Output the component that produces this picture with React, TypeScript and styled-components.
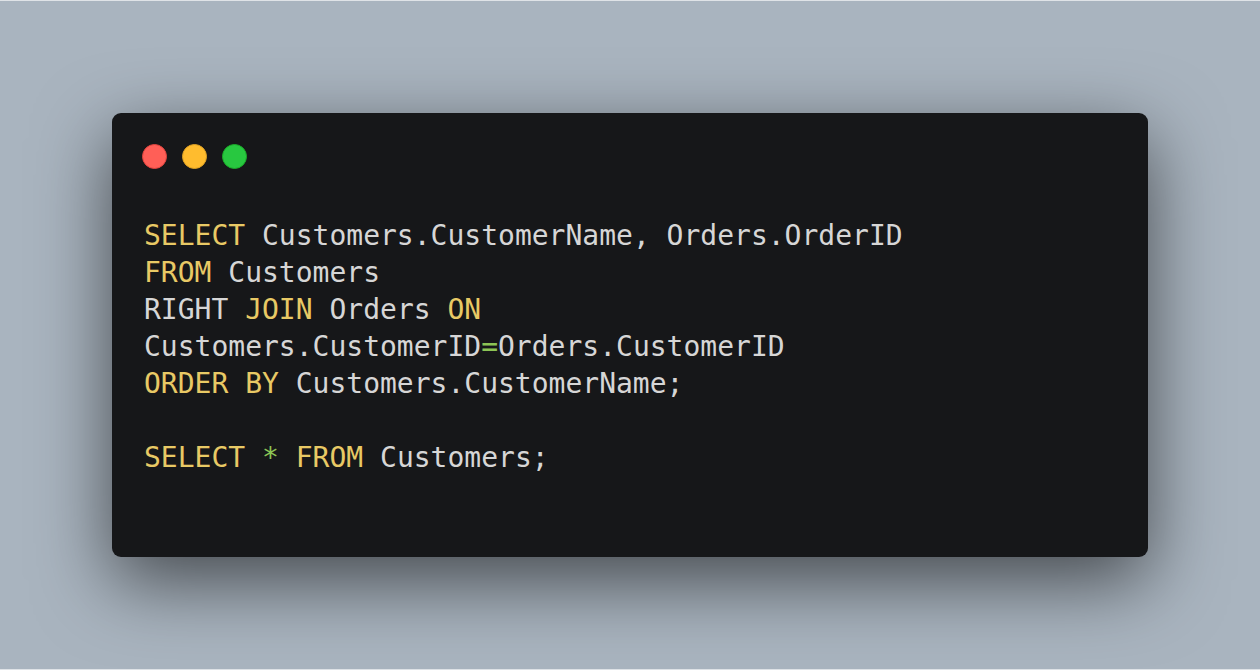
import React from "react";
import styled, { createGlobalStyle } from "styled-components";

const Global = createGlobalStyle`
  html, body { margin: 0; padding: 0; }
  body { background: #a9b4bf; }
`;

const Page = styled.div`
  box-sizing: border-box;
  width: 1260px;
  height: 670px;
  background: #a9b4bf;
  border-top: 1px solid #dfe3e7;
  border-bottom: 1px solid #dfe3e7;
  padding: 112px 112px 0 112px;
`;

const Window = styled.div`
  box-sizing: border-box;
  width: 1036px;
  height: 444px;
  background: #161719;
  border-radius: 9px;
  box-shadow: 0 24px 76px rgba(0, 0, 0, 0.6);
  padding: 31px 30px 0 30px;
`;

const Dots = styled.div`
  display: flex;
  gap: 15px;
`;

const Dot = styled.span<{ $c: string; $b: string }>`
  width: 25px;
  height: 25px;
  border-radius: 50%;
  box-sizing: border-box;
  background: ${(p) => p.$c};
  border: 1px solid ${(p) => p.$b};
`;

const Code = styled.pre`
  margin: 48px 0 0 2px;
  font-family: "DejaVu Sans Mono", monospace;
  font-size: 28px;
  line-height: 37px;
  color: #d6d6d6;
`;

const Kw = styled.span`
  color: #e8c965;
`;

const Op = styled.span`
  color: #8cc455;
`;

export default function App() {
  return (
    <>
      <Global />
      <Page>
        <Window>
          <Dots>
            <Dot $c="#ff5f57" $b="#e0443e" />
            <Dot $c="#ffbc2e" $b="#dea123" />
            <Dot $c="#28c840" $b="#1aab29" />
          </Dots>
          <Code>
            <Kw>SELECT</Kw> Customers.CustomerName, Orders.OrderID{"\n"}
            <Kw>FROM</Kw> Customers{"\n"}
            RIGHT <Kw>JOIN</Kw> Orders <Kw>ON</Kw>{"\n"}
            Customers.CustomerID<Op>=</Op>Orders.CustomerID{"\n"}
            <Kw>ORDER BY</Kw> Customers.CustomerName;{"\n"}
            {"\n"}
            <Kw>SELECT</Kw> <Op>*</Op> <Kw>FROM</Kw> Customers;
          </Code>
        </Window>
      </Page>
    </>
  );
}
